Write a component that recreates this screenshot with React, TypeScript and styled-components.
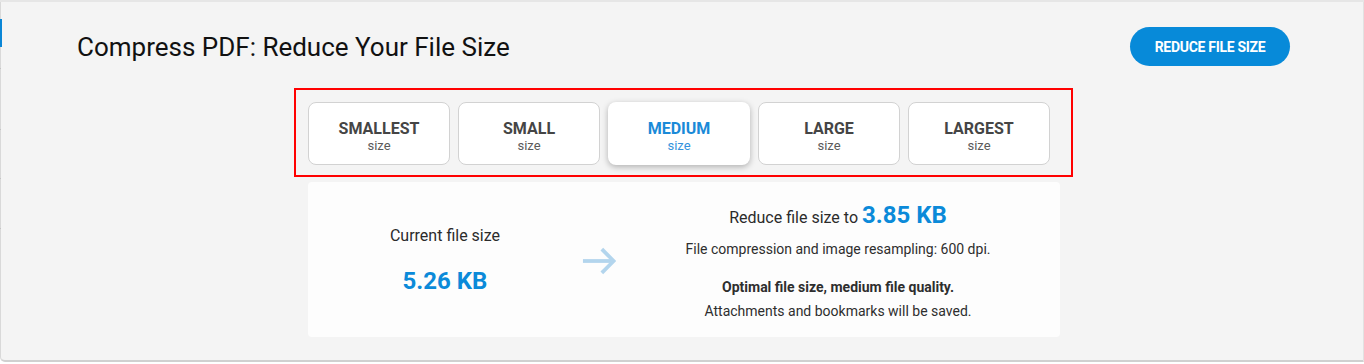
import React from "react";
import styled, { createGlobalStyle } from "styled-components";

const GlobalStyle = createGlobalStyle`
  html, body { margin: 0; padding: 0; background: #ffffff; }
  body { font-family: Roboto, "Liberation Sans", Arial, sans-serif; }
  * { box-sizing: border-box; }
`;

const Frame = styled.div`
  width: 1364px;
  height: 364px;
  border-top: 2px solid #e6e6e6;
  background: #ffffff;
`;

const Panel = styled.div`
  position: relative;
  height: 360px;
  background: #f4f4f4;
  border-left: 1px solid #d9d9d9;
  border-right: 1px solid #e2e2e2;
  border-bottom: 2px solid #d0d0d0;
  border-bottom-left-radius: 5px;
  display: flex;
  flex-direction: column;
`;

const EdgeMark = styled.span<{ $top: number; $h: number; $blue?: boolean }>`
  position: absolute;
  left: -1px;
  top: ${(p) => p.$top}px;
  width: ${(p) => (p.$blue ? 2 : 1)}px;
  height: ${(p) => p.$h}px;
  background: ${(p) => (p.$blue ? "#0a86d6" : "#c4c4c4")};
`;

const Header = styled.header`
  display: flex;
  align-items: center;
  justify-content: space-between;
  margin-top: 25px;
  padding: 0 73px 0 76px;
  height: 39px;
`;

const Title = styled.h1`
  margin: 0;
  font-size: 26px;
  font-weight: 400;
  color: #111111;
  letter-spacing: 0;
`;

const PrimaryButton = styled.button`
  height: 39px;
  width: 160px;
  border: none;
  border-radius: 20px;
  background: #078ad9;
  color: #ffffff;
  font-family: Roboto, "Liberation Sans", Arial, sans-serif;
  font-weight: 700;
  font-size: 14px;
  text-transform: uppercase;
  letter-spacing: -0.3px;
  cursor: pointer;
`;

const Body = styled.div`
  display: flex;
  flex-direction: column;
  align-items: flex-start;
  padding-left: 293px;
  margin-top: 22px;
`;

const OptionsBox = styled.div`
  width: 779px;
  height: 89px;
  border: 2px solid #ff0000;
  padding: 12px 0 0 12px;
  display: flex;
  gap: 8px;
`;

const Option = styled.div<{ $active?: boolean }>`
  width: 142px;
  height: 63px;
  background: #ffffff;
  border: 1px solid ${(p) => (p.$active ? "transparent" : "#d2d2d2")};
  border-radius: 8px;
  box-shadow: ${(p) => (p.$active ? "0 2px 6px rgba(0,0,0,0.28)" : "none")};
  display: flex;
  flex-direction: column;
  align-items: center;
  justify-content: center;
  padding-top: 6px;
  color: ${(p) => (p.$active ? "#1a8ad8" : "#454545")};
`;

const OptionLabel = styled.span`
  font-size: 16px;
  font-weight: 700;
  line-height: 17px;
`;

const OptionSub = styled.span<{ $active?: boolean }>`
  font-size: 13px;
  line-height: 17px;
  color: ${(p) => (p.$active ? "#3593dc" : "#5a5a5a")};
`;

const InfoCard = styled.section`
  margin: 5px 0 0 14px;
  width: 752px;
  height: 155px;
  background: #fdfdfd;
  border-radius: 4px;
  display: grid;
  grid-template-columns: 274px 34px 444px;
  align-items: center;
`;

const CurrentCol = styled.div`
  display: flex;
  flex-direction: column;
  align-items: center;
  gap: 22px;
  padding-top: 1px;
`;

const Caption = styled.div`
  font-size: 16px;
  color: #2b2b2b;
  line-height: 19px;
`;

const BigNumber = styled.span`
  font-size: 24px;
  font-weight: 700;
  color: #0b8ad9;
  line-height: 28px;
`;

const ArrowWrap = styled.div`
  display: flex;
  align-items: center;
  justify-content: center;
  padding-top: 2px;
`;

const ResultCol = styled.div`
  display: flex;
  flex-direction: column;
  align-items: center;
`;

const ResultHeading = styled.div`
  font-size: 16px;
  color: #2b2b2b;
  line-height: 28px;
  display: flex;
  align-items: baseline;
  gap: 4px;
`;

const Line = styled.p<{ $bold?: boolean; $gap: number }>`
  margin: ${(p) => p.$gap}px 0 0;
  font-size: 14px;
  line-height: 16px;
  font-weight: ${(p) => (p.$bold ? 700 : 400)};
  color: #2e2e2e;
`;

const options = [
  { label: "SMALLEST" },
  { label: "SMALL" },
  { label: "MEDIUM", active: true },
  { label: "LARGE" },
  { label: "LARGEST" },
];

export default function App() {
  return (
    <>
      <GlobalStyle />
      <Frame>
        <Panel>
          <EdgeMark $top={17} $h={28} $blue />
          <EdgeMark $top={66} $h={1} />
          <EdgeMark $top={127} $h={1} />
          <EdgeMark $top={176} $h={1} />
          <EdgeMark $top={226} $h={1} />
          <Header>
            <Title>Compress PDF: Reduce Your File Size</Title>
            <PrimaryButton>Reduce file size</PrimaryButton>
          </Header>
          <Body>
            <OptionsBox>
              {options.map((o) => (
                <Option key={o.label} $active={o.active}>
                  <OptionLabel>{o.label}</OptionLabel>
                  <OptionSub $active={o.active}>size</OptionSub>
                </Option>
              ))}
            </OptionsBox>
            <InfoCard>
              <CurrentCol>
                <Caption>Current file size</Caption>
                <BigNumber>5.26 KB</BigNumber>
              </CurrentCol>
              <ArrowWrap>
                <svg width="36" height="30" viewBox="0 0 36 30" fill="none">
                  <path d="M1 15 H33" stroke="#b3d5ed" strokeWidth="4" />
                  <path d="M21 2.5 L33.5 15 L21 27.5" stroke="#b3d5ed" strokeWidth="4" />
                </svg>
              </ArrowWrap>
              <ResultCol>
                <ResultHeading>
                  <span>Reduce file size to</span>
                  <BigNumber>3.85 KB</BigNumber>
                </ResultHeading>
                <Line $gap={9}>File compression and image resampling: 600 dpi.</Line>
                <Line $gap={22} $bold>Optimal file size, medium file quality.</Line>
                <Line $gap={8}>Attachments and bookmarks will be saved.</Line>
              </ResultCol>
            </InfoCard>
          </Body>
        </Panel>
      </Frame>
    </>
  );
}
